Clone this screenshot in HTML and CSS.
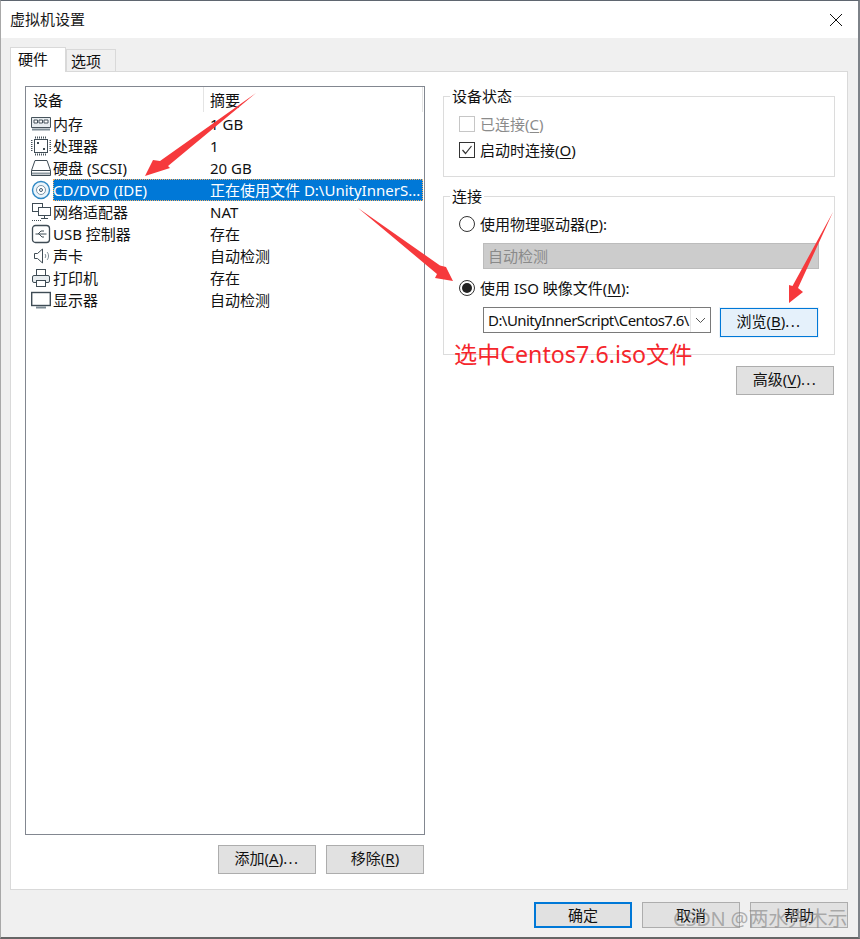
FILE: index.html
```html
<!DOCTYPE html>
<html lang="zh-CN">
<head>
<meta charset="utf-8">
<title>虚拟机设置</title>
<link rel="stylesheet" href="styles.css">
</head>
<body>
<div class="window">
  <header class="titlebar">
    <span class="title">虚拟机设置</span>
    <svg class="close" viewBox="0 0 14 14" width="14" height="14"><path d="M1 1L13 13M13 1L1 13" stroke="#111" stroke-width="1" fill="none"/></svg>
  </header>
  <div class="content">
    <div class="tabs">
      <div class="tab active">硬件</div>
      <div class="tab">选项</div>
    </div>
    <div class="panel">
      <section class="left">
        <div class="list">
          <div class="row head"><span class="c1 hd">设备</span><span class="c2 hd">摘要</span></div>
          <div class="row"><svg class="ico" viewBox="0 0 20 20"><path d="M.5 3.500h19v10H.5z" fill="#e8edf0" stroke="#46535c"/><path d="M3 6h3.500v3H3zM8 6h3.500v3H8zM13 6h4v3h-4z" fill="#fff" stroke="#46535c"/><path d="M1 15.500h18" stroke="#7d8b94" stroke-width="2"/></svg><span class="c1">内存</span><span class="c2">1 GB</span></div>
          <div class="row"><svg class="ico" viewBox="0 0 20 20"><rect x="3.500" y="3.500" width="13" height="13" fill="#fff" stroke="#3f4c55"/><path d="M4 1.500h12M4 18.500h12M.5 4v12M19.500 4v12" stroke="#46535c" stroke-width="2" stroke-dasharray="1 1" fill="none"/><path d="M6 6h2v2H6zM12 12h2v2h-2z" fill="#3f4c55"/></svg><span class="c1">处理器</span><span class="c2">1</span></div>
          <div class="row"><svg class="ico" viewBox="0 0 20 20"><path d="M4 2.500h12l3.500 10v5H.5v-5z" fill="#fff" stroke="#3f4c55"/><path d="M.5 12.500h19" stroke="#3f4c55"/><path d="M1 15.500h18" stroke="#8d99a1" stroke-width="2"/></svg><span class="c1">硬盘 (SCSI)</span><span class="c2">20 GB</span></div>
          <div class="row selected"><svg class="ico" viewBox="0 0 20 20"><circle cx="10" cy="10" r="8.500" fill="#eaf4fb" stroke="#2f88c4" stroke-width="1.400"/><circle cx="10" cy="10" r="4.500" fill="#fff" stroke="#7a95a8"/><circle cx="10" cy="10" r="1.500" fill="#fff" stroke="#40566a"/></svg><div class="sel"><span class="c1">CD/DVD (IDE)</span><span class="c2">正在使用文件 D:\UnityInnerS...</span></div></div>
          <div class="row"><svg class="ico" viewBox="0 0 20 20"><rect x="1.500" y="1.500" width="10" height="8" fill="#fff" stroke="#3f4c55"/><rect x="7.500" y="5.500" width="12" height="8" fill="#fff" stroke="#3f4c55"/><path d="M13.500 14v2M10 16.500h7" stroke="#3f4c55"/><path d="M1 18.500h9" stroke="#3f4c55" stroke-dasharray="1 1"/></svg><span class="c1">网络适配器</span><span class="c2">NAT</span></div>
          <div class="row"><svg class="ico" viewBox="0 0 20 20"><rect x="1.500" y="1.500" width="17" height="17" rx="3" fill="#fff" stroke="#3f4c55" stroke-width="1.300"/><path d="M4.500 10h11M7 10l3-3h3M8 10l3 3h2" stroke="#3f4c55" fill="none"/></svg><span class="c1">USB 控制器</span><span class="c2">存在</span></div>
          <div class="row"><svg class="ico" viewBox="0 0 20 20"><path d="M3.500 7.500h3l5-4.500v14l-5-4.500h-3z" fill="#fff" stroke="#3f4c55"/><path d="M14 8c1 1 1 3 0 4M16 6c2 2 2 6 0 8" stroke="#7d8b94" fill="none"/></svg><span class="c1">声卡</span><span class="c2">自动检测</span></div>
          <div class="row"><svg class="ico" viewBox="0 0 20 20"><rect x="5.500" y="1.500" width="9" height="6" fill="#fff" stroke="#3f4c55"/><rect x="1.500" y="7.500" width="17" height="7" rx="1.500" fill="#e8edf0" stroke="#3f4c55"/><rect x="5.500" y="12.500" width="9" height="6" fill="#fff" stroke="#3f4c55"/></svg><span class="c1">打印机</span><span class="c2">存在</span></div>
          <div class="row"><svg class="ico" viewBox="0 0 20 20"><rect x=".7" y="2.500" width="18.600" height="13" fill="#fff" stroke="#3f4c55" stroke-width="1.400"/><path d="M5 17.500h10" stroke="#7d8b94" stroke-width="2"/></svg><span class="c1">显示器</span><span class="c2">自动检测</span></div>
        </div>
        <div class="list-actions">
          <button class="btn">添加(<u>A</u>)<span class="dots">...</span></button>
          <button class="btn">移除(<u>R</u>)</button>
        </div>
      </section>
      <section class="right">
        <fieldset class="group status">
          <legend>设备状态</legend>
          <label class="opt muted"><span class="check off"></span><span>已连接(<u>C</u>)</span></label>
          <label class="opt"><span class="check"><svg viewBox="0 0 14 14" width="14" height="14"><path d="M2.500 7l3 3.500 6-7.500" stroke="#333" stroke-width="1.200" fill="none"/></svg></span><span>启动时连接(<u>O</u>)</span></label>
        </fieldset>
        <fieldset class="group connect">
          <legend>连接</legend>
          <label class="opt"><span class="radio"></span><span>使用物理驱动器(<u>P</u>):</span></label>
          <div class="indent"><div class="select-off">自动检测</div></div>
          <label class="opt iso"><span class="radio on"></span><span>使用 ISO 映像文件(<u>M</u>):</span></label>
          <div class="indent browse">
            <div class="combo"><span class="combo-text">D:\UnityInnerScript\Centos7.6\</span><span class="combo-arrow"><svg width="11" height="7" viewBox="0 0 11 7"><path d="M1 1l4.500 4.500L10 1" stroke="#555" fill="none"/></svg></span></div>
            <button class="btn hot">浏览(<u>B</u>)<span class="dots">...</span></button>
          </div>
        </fieldset>
        <div class="adv"><button class="btn">高级(<u>V</u>)<span class="dots">...</span></button></div>
      </section>
    </div>
    <footer class="footer">
      <button class="btn primary">确定</button>
      <button class="btn flat">取消</button>
      <button class="btn flat">帮助</button>
    </footer>
  </div>
  <svg class="arrows" width="860" height="939" viewBox="0 0 860 939">
    <path d="M256 93L168 166L170 168L145 176L153 160L160 161Z" fill="#f6393c"/>
    <path d="M358 208L440 265.500L446 267L453 281L435 278L437 274Z" fill="#f6393c"/>
    <path d="M833 212L798 288L803 292L789 303L789 285L792.500 286Z" fill="#f6393c"/>
  </svg>
  <div class="note">选中Centos7.6.iso文件</div>
  <div class="watermark">CSDN @两水先木示</div>
</div>
</body>
</html>
```
FILE: styles.css
```css
* { box-sizing: border-box; }
html, body { margin: 0; padding: 0; }
body { width: 860px; height: 939px; overflow: hidden; background: #fff; font: 15px/20px "Noto Sans", "Noto Sans CJK SC", sans-serif; color: #111; }
u { text-underline-offset: 2px; }
.window { position: relative; width: 860px; height: 939px; display: flex; flex-direction: column; border-top: 1px solid #5f6670; border-left: 1px solid #a8a8a8; border-right: 2px solid #7d8288; border-bottom: 2px solid #666; background: #f0f0f0; }
.titlebar { height: 37px; flex: none; background: #fff; display: flex; align-items: center; justify-content: space-between; padding: 0 15px 2px 9px; }
.close { margin-top: 2px; }
.title { color: #1a1a1a; }
.content { flex: 1; display: flex; flex-direction: column; padding: 9px 10px 0 9px; }
.tabs { display: flex; align-items: flex-end; height: 25px; flex: none; position: relative; z-index: 1; margin-bottom: -1px; }
.tab { width: 50px; height: 23px; background: #f0f0f0; border: 1px solid #d9d9d9; line-height: 22px; padding-left: 4px; }
.tab.active { width: 56px; height: 25px; background: #fff; border-bottom: 0; line-height: 22px; padding-left: 7px; }
.panel { height: 819px; flex: none; background: #fff; border: 1px solid #d9d9d9; display: grid; grid-template-columns: 400px 392px; column-gap: 18px; padding: 14px 13px 0 14px; }
.left { display: flex; flex-direction: column; }
.list { width: 400px; height: 749px; border: 1px solid #828790; background: #fff; padding: 0 1px; }
.row { display: flex; align-items: center; height: 22px; position: relative; padding-left: 4px; }
.row.head { height: 26px; padding-left: 4px; align-items: flex-start; }
.ico { width: 20px; height: 20px; flex: none; margin-right: 2px; }
.row:not(.selected):not(.head) .c1 { width: 157px; }
.c1 { flex: none; white-space: nowrap; }
.hd.c1 { width: 173px; padding: 2px 0 0 2px; border-right: 1px solid #e4e4e4; height: 25px; line-height: 23px; }
.hd.c2 { flex: 1; padding: 2px 0 0 6px; line-height: 23px; height: 25px; border-right: 1px solid #e4e4e4; }
.c2 { white-space: nowrap; }
.sel { flex: 1; display: flex; align-items: center; height: 22px; background: #0078d7; color: #fff; outline: 1px dotted #f7b267; outline-offset: -1px; }
.sel .c1 { width: 157px; }
.list-actions { display: flex; justify-content: flex-end; gap: 10px; padding: 10px 1px 0 0; }
.btn { width: 98px; height: 29px; padding: 0 0 3px; background: #e1e1e1; border: 1px solid #adadad; font: inherit; color: #111; line-height: 20px; }
.dots { letter-spacing: 1.4px; }
.right { display: flex; flex-direction: column; }
.group { margin: 0; border: 1px solid #dcdcdc; min-width: 0; padding: 0 15px; position: relative; }
.group legend { padding: 0 2px; margin-left: -9px; line-height: 20px; height: 20px; }
.status { height: 91px; }
.connect { height: 169px; margin-top: 9px; }
.opt { display: flex; align-items: center; height: 22px; gap: 5px; }
.muted { color: #8b8b8b; margin-top: 7px; }
.status .opt + .opt { margin-top: 4px; }
.check { width: 16px; height: 16px; border: 1px solid #333; flex: none; background: #fff; display: flex; align-items: center; justify-content: center; }
.check.off { border-color: #c6c6c6; }
.radio { width: 16px; height: 16px; border: 1px solid #333; border-radius: 50%; background: #fff; flex: none; position: relative; }
.radio.on::after { content: ""; position: absolute; inset: 2px; border-radius: 50%; background: #222; }
.connect > .opt:first-of-type { margin-top: 7px; }
.indent { padding-left: 24px; }
.select-off { margin-top: 8px; width: 336px; height: 26px; background: #ccc; border: 1px solid #bcbcbc; color: #8a8a8a; line-height: 25px; padding-left: 4px; }
.iso { margin-top: 8px; }
.browse { display: flex; align-items: flex-start; gap: 9px; margin-top: 8px; }
.combo { width: 228px; height: 26px; border: 1px solid #7a7a7a; background: #fff; display: flex; align-items: center; overflow: hidden; }
.combo-text { flex: 1; overflow: hidden; white-space: nowrap; padding-left: 4px; letter-spacing: -.55px; }
.combo-arrow { width: 20px; height: 24px; flex: none; border-left: 1px solid #e5e5e5; display: flex; align-items: center; justify-content: center; }
.hot { background: #e5f1fb; border-color: #0078d7; margin-top: 1px; box-shadow: 0 0 0 1px #eaf3fb; }
.adv { display: flex; justify-content: flex-end; margin-top: 11px; padding-right: 1px; }
.footer { display: flex; justify-content: flex-end; gap: 10px; padding-top: 12px; }
.primary { height: 26px; border: 2px solid #0078d7; padding-bottom: 1px; }
.flat { height: 26px; padding-bottom: 1px; }
.arrows { position: absolute; left: -1px; top: -1px; pointer-events: none; }
.note { position: absolute; left: 453px; top: 339px; font-size: 23.2px; line-height: 28px; color: #f5262c; white-space: nowrap; }
.watermark { position: absolute; left: 672px; top: 906px; font-size: 20px; line-height: 24px; color: rgba(130,130,130,.6); white-space: nowrap; letter-spacing: -.2px; }
```
